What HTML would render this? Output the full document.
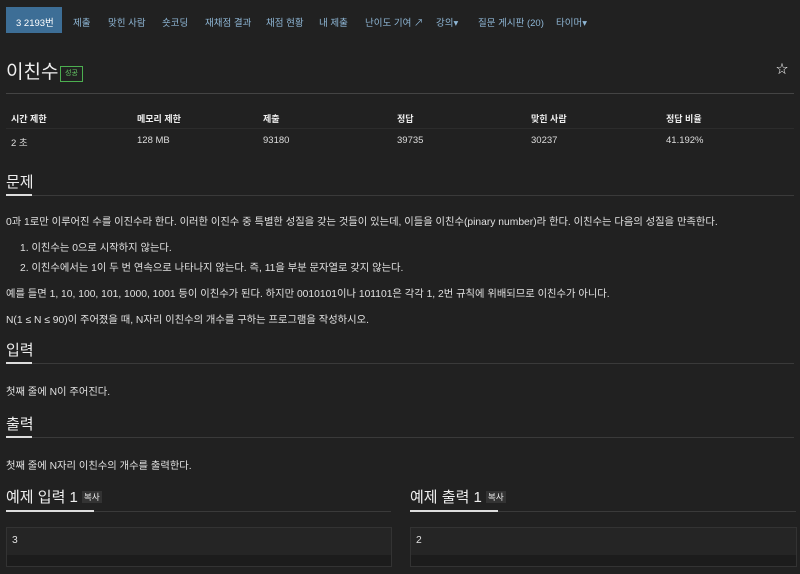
<!DOCTYPE html><html><head><meta charset="utf-8"><style>
body{margin:0;width:800px;height:574px;background:#212121;color:#ddd;font-family:"Liberation Sans","Noto Sans CJK KR",sans-serif;overflow:hidden;position:relative}
.a{position:absolute;white-space:nowrap}
.nav{font-size:9.5px;color:#8fb7d6;top:15px}
.t{font-size:10.3px;color:#e0e0e0}
.th{font-size:9px;font-weight:bold;color:#eee;top:112px}
.td{font-size:9.5px;color:#ddd;top:135px}
.h{font-size:15px;color:#eee}
.ln{position:absolute;height:1px;background:#3a3a3a}
.ul{position:absolute;height:2px;background:#ddd}
.box{position:absolute;top:527px;height:38px;border:1px solid #333;background:#252525}
.sb{position:absolute;left:0;right:0;bottom:0;height:11px;background:#1c1c1c}
.cp{font-size:8.5px;background:#333;padding:1px 2px;color:#eee;vertical-align:2px}
</style></head><body>
<div class="a" style="left:6px;top:7px;width:56px;height:26px;background:#3d6e96"></div>
<div class="a nav" style="left:16px;color:#fff">3 2193번</div>
<div class="a nav" style="left:73px">제출</div>
<div class="a nav" style="left:108px">맞힌 사람</div>
<div class="a nav" style="left:162px">숏코딩</div>
<div class="a nav" style="left:205px">재채점 결과</div>
<div class="a nav" style="left:266px">채점 현황</div>
<div class="a nav" style="left:319px">내 제출</div>
<div class="a nav" style="left:365px">난이도 기여 ↗</div>
<div class="a nav" style="left:436px">강의▾</div>
<div class="a nav" style="left:478px">질문 게시판 (20)</div>
<div class="a nav" style="left:556px">타이머▾</div>
<div class="a" style="left:6px;top:57px;font-size:19px;color:#f0f0f0">이친수</div>
<div class="a" style="left:60px;top:66px;width:21px;height:14px;border:1px solid #4caf50;font-size:7px;color:#6c6;text-align:center;line-height:14px">성공</div>
<div class="a" style="left:776px;top:60px;font-size:12px;color:#fff">☆</div>
<div class="ln" style="left:6px;right:6px;top:93px;background:#444"></div>
<div class="a th" style="left:11px">시간 제한</div><div class="a th" style="left:137px">메모리 제한</div><div class="a th" style="left:263px">제출</div><div class="a th" style="left:397px">정답</div><div class="a th" style="left:531px">맞힌 사람</div><div class="a th" style="left:666px">정답 비율</div>
<div class="ln" style="left:6px;right:6px;top:128px;background:#2c2c2c"></div>
<div class="a td" style="left:11px">2 초</div><div class="a td" style="left:137px">128 MB</div><div class="a td" style="left:263px">93180</div><div class="a td" style="left:397px">39735</div><div class="a td" style="left:531px">30237</div><div class="a td" style="left:666px">41.192%</div>
<div class="a h" style="left:6px;top:171px">문제</div>
<div class="ln" style="left:6px;right:6px;top:195px"></div><div class="ul" style="left:6px;width:26px;top:194px"></div>
<div class="a t" style="left:6px;top:213px">0과 1로만 이루어진 수를 이진수라 한다. 이러한 이진수 중 특별한 성질을 갖는 것들이 있는데, 이들을 이친수(pinary number)라 한다. 이친수는 다음의 성질을 만족한다.</div>
<div class="a t" style="left:20px;top:239px">1. 이친수는 0으로 시작하지 않는다.</div>
<div class="a t" style="left:20px;top:259px">2. 이친수에서는 1이 두 번 연속으로 나타나지 않는다. 즉, 11을 부분 문자열로 갖지 않는다.</div>
<div class="a t" style="left:6px;top:285px">예를 들면 1, 10, 100, 101, 1000, 1001 등이 이친수가 된다. 하지만 0010101이나 101101은 각각 1, 2번 규칙에 위배되므로 이친수가 아니다.</div>
<div class="a t" style="left:6px;top:311px">N(1 ≤ N ≤ 90)이 주어졌을 때, N자리 이친수의 개수를 구하는 프로그램을 작성하시오.</div>
<div class="a h" style="left:6px;top:339px">입력</div>
<div class="ln" style="left:6px;right:6px;top:363px"></div><div class="ul" style="left:6px;width:26px;top:362px"></div>
<div class="a t" style="left:6px;top:383px">첫째 줄에 N이 주어진다.</div>
<div class="a h" style="left:6px;top:413px">출력</div>
<div class="ln" style="left:6px;right:6px;top:437px"></div><div class="ul" style="left:6px;width:26px;top:436px"></div>
<div class="a t" style="left:6px;top:457px">첫째 줄에 N자리 이친수의 개수를 출력한다.</div>
<div class="a h" style="left:6px;top:486px">예제 입력 1 <span class="cp">복사</span></div>
<div class="ln" style="left:6px;width:385px;top:511px"></div><div class="ul" style="left:6px;width:88px;top:510px"></div>
<div class="a h" style="left:410px;top:486px">예제 출력 1 <span class="cp">복사</span></div>
<div class="ln" style="left:410px;width:386px;top:511px"></div><div class="ul" style="left:410px;width:88px;top:510px"></div>
<div class="box" style="left:6px;width:384px"><div class="a t" style="left:5px;top:7px">3</div><div class="sb"></div></div>
<div class="box" style="left:410px;width:385px"><div class="a t" style="left:5px;top:7px">2</div><div class="sb"></div></div>
</body></html>
